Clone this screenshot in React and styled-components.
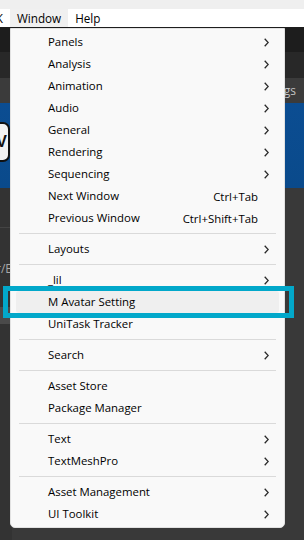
import styled, { createGlobalStyle } from 'styled-components';

const GlobalStyle = createGlobalStyle`
  html, body {
    margin: 0;
    padding: 0;
  }
  body {
    width: 304px;
    height: 540px;
    overflow: hidden;
    background: #333333;
    font-family: "Open Sans", "Noto Sans", sans-serif;
  }
`;

const Screen = styled.div`
  position: relative;
  width: 304px;
  height: 540px;
  display: flex;
  flex-direction: column;
  overflow: hidden;
`;

const TitleStrip = styled.div`
  height: 9px;
  background: #efefef;
`;

const MenuBar = styled.div`
  height: 18px;
  background: #ffffff;
  display: flex;
  align-items: stretch;
  font-size: 11.7px;
  color: #000;
`;

const BarItem = styled.div`
  display: flex;
  align-items: center;
  padding: 0 7px;
  white-space: nowrap;
  background: ${(p) => (p.$open ? '#f0f0f0' : 'transparent')};
`;

const ClippedItem = styled(BarItem)`
  width: 10px;
  box-sizing: border-box;
  padding: 0 7px 0 0;
  justify-content: flex-end;
  overflow: hidden;
`;

const Band = styled.div`
  height: ${(p) => p.$h}px;
  background: ${(p) => p.$bg};
  flex-shrink: 0;
`;

const TabHeader = styled(Band)`
  display: flex;
  align-items: center;
  justify-content: flex-end;
  padding-right: 8px;
  font-size: 12px;
  color: #c4c4c4;
`;

const Banner = styled(Band)`
  background: linear-gradient(180deg, #0b4d92 0%, #0a4a8b 100%);
  padding-top: 19px;
  box-sizing: border-box;
`;

const LogoButton = styled.div`
  width: 40px;
  height: 40px;
  margin-left: -30px;
  box-sizing: border-box;
  border: 2px solid #111;
  border-radius: 7px;
  background: #f2f2f2;
  display: flex;
  align-items: center;
  justify-content: flex-end;
  padding-right: 1px;
  font: 900 16px "Liberation Sans", sans-serif;
  color: #111;
`;

const Body = styled.div`
  flex: 1;
  display: flex;
  background: #393939;
`;

const SideColumn = styled.div`
  width: 12px;
  display: flex;
  flex-direction: column;
  background: #333333;
  overflow: hidden;
`;

const SideGap = styled.div`
  height: ${(p) => p.$h}px;
  flex-shrink: 0;
  border-bottom: ${(p) => (p.$line ? '1px solid #444' : 'none')};
`;

const SideLabel = styled.div`
  height: 20px;
  display: flex;
  justify-content: flex-end;
  align-items: center;
  white-space: nowrap;
  font-size: 12px;
  color: #a8a8a8;
  margin-bottom: 29px;
`;

const SideField = styled.div`
  height: 17px;
  background: #4a4a4a;
  flex-shrink: 0;
`;

const Dropdown = styled.div`
  position: absolute;
  left: 10px;
  top: 28px;
  width: 275px;
  box-sizing: border-box;
  padding: 2px 0;
  background: #f9f9f9;
  border: 1px solid #e2e2e2;
  border-radius: 0 0 5px 5px;
  font-size: 11.4px;
  color: #000;
`;

const Row = styled.div`
  height: 22px;
  margin: 0 5px;
  padding: 0 10px 0 32px;
  display: flex;
  align-items: center;
  border-radius: 3px;
  background: ${(p) => (p.$hover ? '#efefef' : 'transparent')};
`;

const Label = styled.span`
  flex: 1;
  white-space: nowrap;
  line-height: 16px;
`;

const Shortcut = styled.span`
  white-space: nowrap;
`;

const ArrowSlot = styled.span`
  width: 11px;
  display: flex;
  justify-content: flex-end;
  align-items: center;
`;

const Separator = styled.div`
  height: 1px;
  margin: 4px 8px;
  background: #dadada;
`;

const Callout = styled.div`
  position: absolute;
  left: 3px;
  top: 286px;
  width: 291px;
  height: 32px;
  box-sizing: border-box;
  border: 5px solid #02a8ca;
`;

const Chevron = () => (
  <svg width="5" height="9" viewBox="0 0 5 9">
    <path d="M0.7 0.7 L4.2 4.5 L0.7 8.3" fill="none" stroke="#2b2b2b" strokeWidth="1.3" />
  </svg>
);

const items = [
  { label: 'Panels', sub: true },
  { label: 'Analysis', sub: true },
  { label: 'Animation', sub: true },
  { label: 'Audio', sub: true },
  { label: 'General', sub: true },
  { label: 'Rendering', sub: true },
  { label: 'Sequencing', sub: true },
  { label: 'Next Window', key: 'Ctrl+Tab' },
  { label: 'Previous Window', key: 'Ctrl+Shift+Tab' },
  { sep: true },
  { label: 'Layouts', sub: true },
  { sep: true },
  { label: '_lil', sub: true },
  { label: 'M Avatar Setting', hover: true },
  { label: 'UniTask Tracker' },
  { sep: true },
  { label: 'Search', sub: true },
  { sep: true },
  { label: 'Asset Store' },
  { label: 'Package Manager' },
  { sep: true },
  { label: 'Text', sub: true },
  { label: 'TextMeshPro', sub: true },
  { sep: true },
  { label: 'Asset Management', sub: true },
  { label: 'UI Toolkit', sub: true },
];

const App = () => {
  return (
    <Screen>
      <GlobalStyle />
      <TitleStrip />
      <MenuBar>
        <ClippedItem>VRChat SDK</ClippedItem>
        <BarItem $open>Window</BarItem>
        <BarItem>Help</BarItem>
      </MenuBar>
      <Band $h={25} $bg="#1d1d1d" />
      <Band $h={26} $bg="#282828" />
      <TabHeader $h={25} $bg="#3b3b3b">Settings</TabHeader>
      <Banner $h={85}>
        <LogoButton>V</LogoButton>
      </Banner>
      <Body>
        <SideColumn>
          <SideGap $h={39} $line />
          <SideGap $h={30} />
          <SideLabel>Avatar/E</SideLabel>
          <SideField />
        </SideColumn>
      </Body>

      <Dropdown>
        {items.map((it, i) =>
          it.sep ? (
            <Separator key={i} />
          ) : (
            <Row key={i} $hover={it.hover}>
              <Label>{it.label}</Label>
              {it.key && <Shortcut>{it.key}</Shortcut>}
              <ArrowSlot>{it.sub && <Chevron />}</ArrowSlot>
            </Row>
          )
        )}
      </Dropdown>
      <Callout />
    </Screen>
  );
};

export default App;
